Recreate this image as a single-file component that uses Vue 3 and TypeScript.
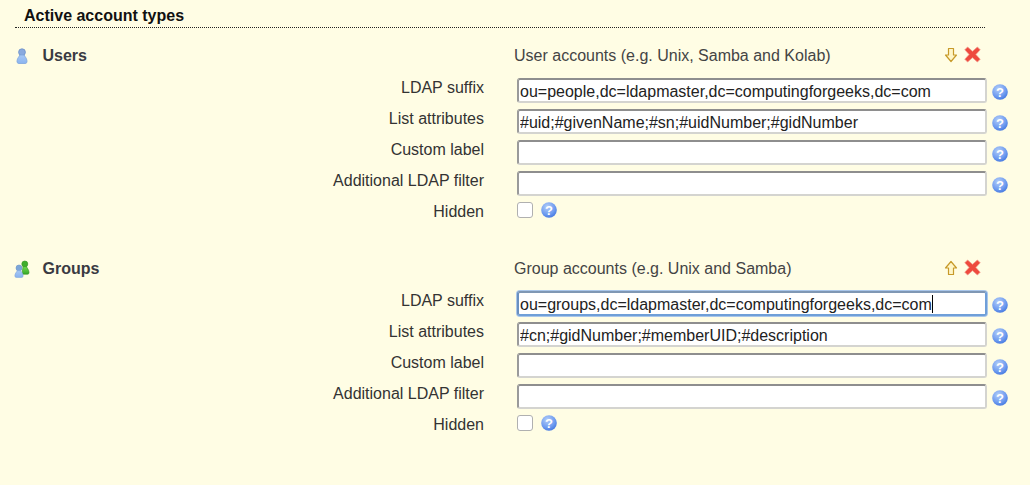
<script setup lang="ts">
interface Row { label: string; value: string; focused?: boolean }
interface Section { id: string; title: string; desc: string; arrow: 'down' | 'up'; rows: Row[] }

const sections: Section[] = [
  {
    id: 'users', title: 'Users', desc: 'User accounts (e.g. Unix, Samba and Kolab)', arrow: 'down',
    rows: [
      { label: 'LDAP suffix', value: 'ou=people,dc=ldapmaster,dc=computingforgeeks,dc=com' },
      { label: 'List attributes', value: '#uid;#givenName;#sn;#uidNumber;#gidNumber' },
      { label: 'Custom label', value: '' },
      { label: 'Additional LDAP filter', value: '' },
    ],
  },
  {
    id: 'groups', title: 'Groups', desc: 'Group accounts (e.g. Unix and Samba)', arrow: 'up',
    rows: [
      { label: 'LDAP suffix', value: 'ou=groups,dc=ldapmaster,dc=computingforgeeks,dc=com', focused: true },
      { label: 'List attributes', value: '#cn;#gidNumber;#memberUID;#description' },
      { label: 'Custom label', value: '' },
      { label: 'Additional LDAP filter', value: '' },
    ],
  },
]
</script>

<template>
  <div class="page">
    <svg width="0" height="0" class="defs" aria-hidden="true">
      <defs>
        <radialGradient id="helpGrad" cx="40%" cy="30%" r="80%">
          <stop offset="0" stop-color="#b4cef8" />
          <stop offset="0.6" stop-color="#6f9cf0" />
          <stop offset="1" stop-color="#3a6fdc" />
        </radialGradient>
        <linearGradient id="blueGrad" x1="0" y1="0" x2="0" y2="1">
          <stop offset="0" stop-color="#a8c8f4" />
          <stop offset="1" stop-color="#8ab4f0" />
        </linearGradient>
        <linearGradient id="greenGrad" x1="0" y1="0" x2="0" y2="1">
          <stop offset="0" stop-color="#6fdc50" />
          <stop offset="1" stop-color="#38a828" />
        </linearGradient>
      </defs>
    </svg>

    <h2 class="heading">Active account types</h2>

    <section v-for="s in sections" :key="s.id" class="section">
      <div class="head">
        <div class="head-left">
          <svg v-if="s.id === 'users'" class="type-icon" width="16" height="16" viewBox="0 0 16 16">
            <circle cx="8" cy="4.200" r="3.400" fill="#8aaade" stroke="#6d90c8" stroke-width=".8" />
            <path d="M5.800 7h4.400c.2 1.300 2.600 2.900 2.800 5.900.1 1.500-.5 2.600-1.800 2.600H4.800c-1.300 0-1.900-1.100-1.800-2.600.2-3 2.600-4.600 2.800-5.900z" fill="url(#blueGrad)" stroke="#7fa6dd" stroke-width=".8" />
          </svg>
          <svg v-else class="type-icon" width="16" height="18" viewBox="0 0 16 18">
            <circle cx="10.800" cy="4" r="3" fill="#3fae2c" stroke="#2f8f20" stroke-width=".6" />
            <path d="M9 6.600h3.600c.2 1.200 2.200 3 2.400 5.600.1 1.200-.4 2-1.300 2H8z" fill="url(#greenGrad)" stroke="#2f8f20" stroke-width=".6" />
            <circle cx="5" cy="8" r="3" fill="#7da6d8" stroke="#6a94c8" stroke-width=".6" />
            <path d="M3.200 10.600h3.600c.2 1 2.200 2.800 2.300 4.800.1 1.200-.4 2-1.300 2H2.200c-.9 0-1.400-.8-1.300-2 .1-2 2.100-3.800 2.300-4.800z" fill="url(#blueGrad)" stroke="#7fa6dd" stroke-width=".6" />
          </svg>
          <span class="title">{{ s.title }}</span>
        </div>
        <span class="desc">{{ s.desc }}</span>
        <div class="actions">
          <svg class="arrow" width="14" height="16" viewBox="0 0 14 16">
            <path v-if="s.arrow === 'down'" d="M4.500 1.500h5v6.500h3L7 14.500 1.500 8h3z" fill="#fff6c8" stroke="#c79a2a" stroke-width="1.200" stroke-linejoin="round" />
            <path v-else d="M4.500 14.500h5V8h3L7 1.500 1.500 8h3z" fill="#fff6c8" stroke="#c79a2a" stroke-width="1.200" stroke-linejoin="round" />
          </svg>
          <svg class="remove" width="17" height="17" viewBox="0 0 17 17">
            <path d="M3.600 1l4.900 4.300L13.400 1l2.800 2.800-4.300 4.700 4.300 4.700-2.800 2.800-4.900-4.300-4.900 4.300-2.800-2.800 4.300-4.700L.8 3.800z" fill="#ee4a3e" stroke="#f29a8c" stroke-width=".8" stroke-linejoin="round" />
          </svg>
        </div>
      </div>

      <div class="form">
        <template v-for="r in s.rows" :key="r.label">
          <label class="label">{{ r.label }}</label>
          <div class="field-wrap">
            <input class="field" :class="{ focused: r.focused }" type="text" :value="r.value" readonly />
            <span v-if="r.focused" class="caret"></span>
          </div>
          <svg class="help" width="16" height="16" viewBox="0 0 16 16">
            <circle cx="8" cy="8" r="7.800" fill="url(#helpGrad)" />
            <text x="8" y="12.800" text-anchor="middle" class="help-q">?</text>
          </svg>
        </template>
        <label class="label hidden-label">Hidden</label>
        <div class="check-row">
          <span class="check"></span>
          <svg class="help" width="16" height="16" viewBox="0 0 16 16">
            <circle cx="8" cy="8" r="7.800" fill="url(#helpGrad)" />
            <text x="8" y="12.800" text-anchor="middle" class="help-q">?</text>
          </svg>
        </div>
      </div>
    </section>
  </div>
</template>

<style>
html, body { margin: 0; background: #fffde4; }
</style>

<style scoped>
.page {
  width: 1030px;
  height: 485px;
  box-sizing: border-box;
  overflow: hidden;
  background: #fffde4;
  padding-top: 7px;
  font-family: "Liberation Sans", Arial, sans-serif;
  font-size: 16px;
  color: #333;
}
.defs { position: absolute; }
.heading {
  margin: 0 0 0 15px;
  width: 961px;
  padding: 0 0 3px 9px;
  height: 17px;
  line-height: 17px;
  font-size: 16px;
  font-weight: bold;
  color: #111;
  border-bottom: 1px dotted #222;
}
.section { height: 213px; padding-top: 18px; box-sizing: border-box; }
.head {
  display: flex;
  align-items: center;
  height: 20px;
}
.head-left {
  width: 514px;
  display: flex;
  align-items: center;
  padding-left: 14px;
  box-sizing: border-box;
  flex: none;
}
.type-icon { flex: none; }
.title { margin-left: 12.500px; font-weight: bold; color: #3a3a42; }
.desc { width: 430px; flex: none; color: #444; }
.actions { display: flex; align-items: center; gap: 6px; margin-top: -3px; }
.arrow { flex: none; }
.remove { flex: none; }
.form {
  display: grid;
  grid-template-columns: 484px 470px 16px;
  grid-auto-rows: 25px;
  row-gap: 6px;
  margin-top: 12px;
  align-items: center;
}
.label { text-align: right; color: #333; position: relative; top: -3px; }
.field-wrap {
  position: relative;
  margin-left: 33px;
  width: 470px;
  height: 25px;
}
.field {
  display: block;
  width: 100%;
  height: 100%;
  box-sizing: border-box;
  border: 2px solid #d4d4d0;
  border-top-color: #8e8e8e;
  border-left-color: #9a9a9a;
  border-radius: 3px;
  background: #fff;
  padding: 2px 1px 0;
  margin: 0;
  font: inherit;
  color: #222;
  outline: none;
}
.field.focused {
  border-color: #6f9fd8;
  border-top-color: #7f97b4;
  border-left-color: #6a90c0;
  box-shadow: 0 0 0 1px #a9c6ea;
}
.caret {
  position: absolute;
  left: 415px;
  top: 4px;
  width: 1px;
  height: 18px;
  background: #000;
}
.help {
  margin-left: 38px;
  justify-self: start;
  grid-column: 3;
  position: relative;
  top: 1px;
}
.help-q {
  font-family: "Liberation Sans", Arial, sans-serif;
  font-size: 13px;
  font-weight: bold;
  fill: #fff;
}
.hidden-label { grid-column: 1; }
.check-row {
  grid-column: 2 / span 2;
  display: flex;
  align-items: center;
  margin-left: 33px;
  gap: 8px;
  position: relative;
  top: -5px;
}
.check-row .help { margin-left: 0; top: 0; }
.check {
  width: 14px;
  height: 14px;
  border: 1px solid #b0b0b0;
  border-radius: 3px;
  background: #fff;
  flex: none;
}
</style>
